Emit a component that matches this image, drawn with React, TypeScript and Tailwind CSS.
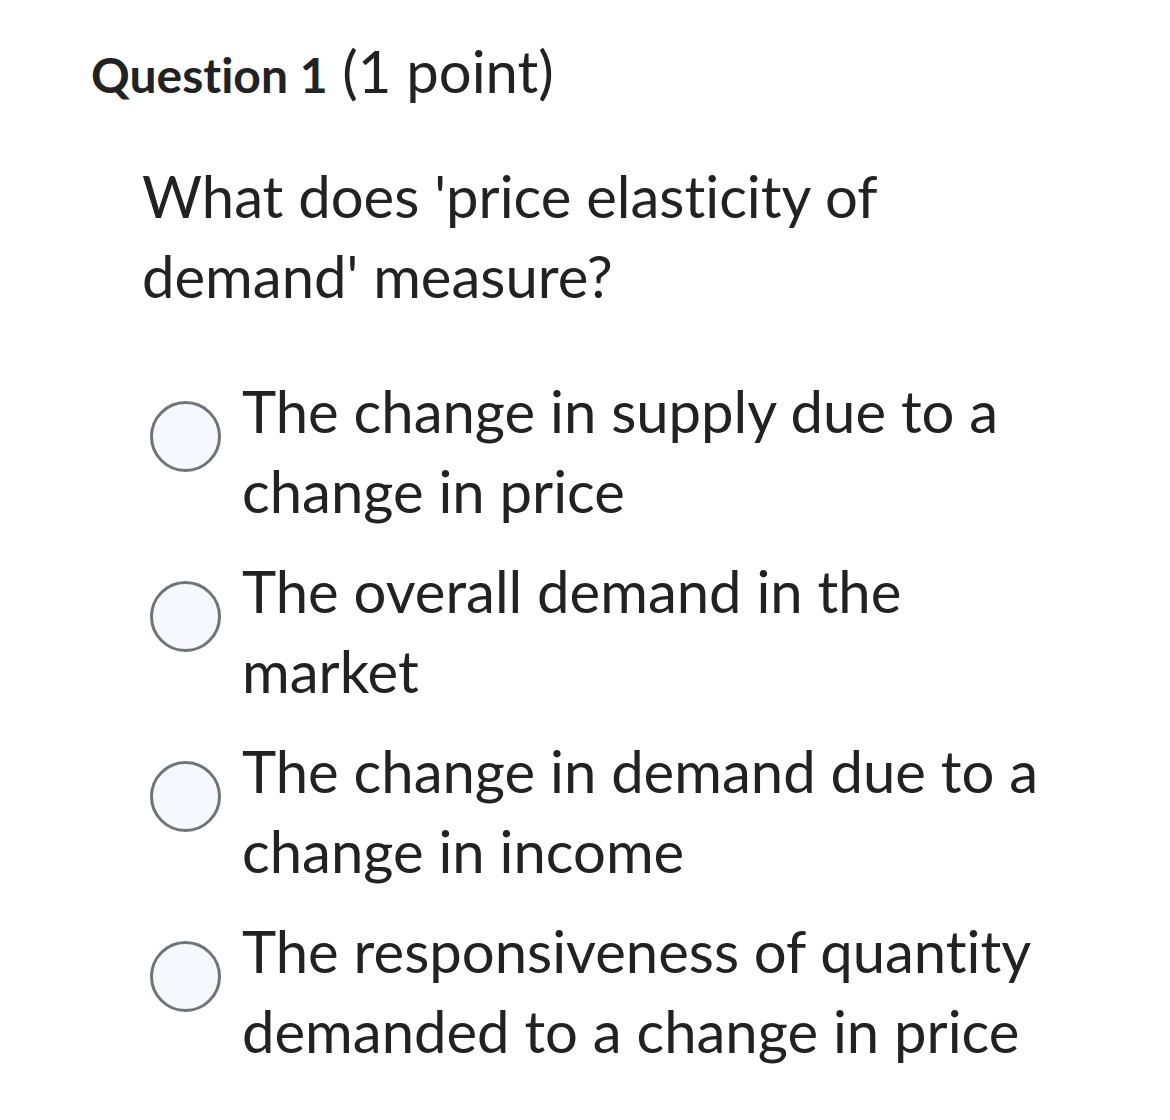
import React from 'react';

// the installed Lato joins "ti" into one glyph; a zero-width non-joiner keeps them apart
const noLig = (s: string) => s.replace(/ti/g, 't\u200Ci');

const options = [
  'The change in supply due to a change in price',
  'The overall demand in the market',
  'The change in demand due to a change in income',
  'The responsiveness of quantity demanded to a change in price',
];

export default function App() {
  return (
    <div className="w-full h-[1120px] bg-white text-[#222222] font-['Lato','Noto_Sans',sans-serif]">
      <div className="pt-[41px] pl-[91px]">
        <h1 className="text-[58px] font-normal leading-[60px]">
          <span className="text-[48px] font-bold">{noLig('Question 1')}</span>
          <span> (1 point)</span>
        </h1>
      </div>

      <div className="mt-[51px] pl-[142px]">
        <p className="text-[58px] leading-[80px] w-[800px]">
          {noLig("What does 'price elasticity of demand' measure?")}
        </p>

        <div className="mt-[55px] flex flex-col gap-5 pl-[8px]">
          {options.map((opt) => (
            <label key={opt} className="flex items-start gap-[21px]">
              <span className="mt-[30px] shrink-0 w-[71px] h-[71px] rounded-full border-[3px] border-[#707478] bg-[#f6f8fd]" />
              <span className="text-[58px] leading-[80px] w-[800px]">{noLig(opt)}</span>
            </label>
          ))}
        </div>
      </div>
    </div>
  );
}
